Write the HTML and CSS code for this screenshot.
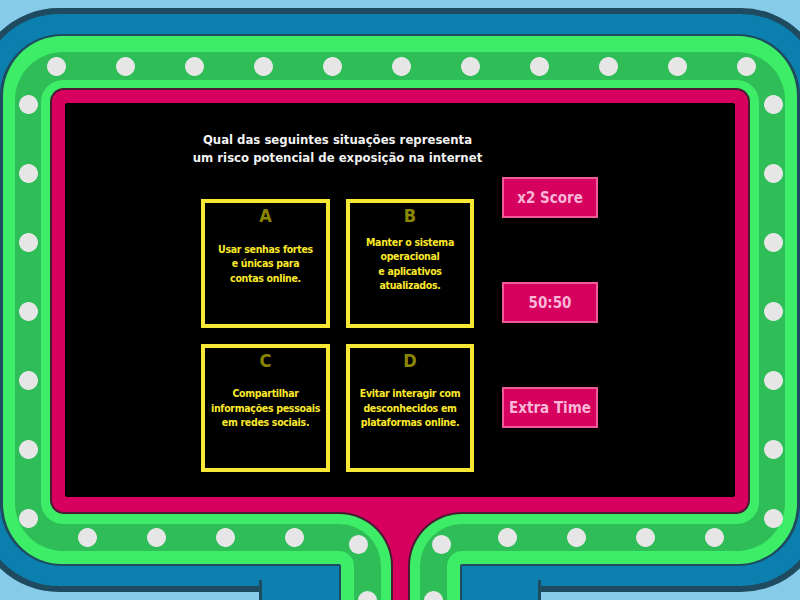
FILE: index.html
```
<!DOCTYPE html>
<html lang="pt">
<head>
<meta charset="utf-8">
<title>Quiz</title>
<link rel="stylesheet" href="styles.css">
</head>
<body>
<div class="board">
  <div class="ring">
    <div class="band">
      <div class="inner">
        <div class="line">
          <div class="pink">
            <div class="screen">
              <div class="main">
                <p class="question">Qual das seguintes situações representa<br>um risco potencial de exposição na internet</p>
                <div class="grid">
                  <div class="card"><div class="letter">A</div><div class="answer">Usar senhas fortes<br>e únicas para<br>contas online.</div></div>
                  <div class="card"><div class="letter">B</div><div class="answer">Manter o sistema<br>operacional<br>e aplicativos<br>atualizados.</div></div>
                  <div class="card"><div class="letter">C</div><div class="answer">Compartilhar<br>informações pessoais<br>em redes sociais.</div></div>
                  <div class="card"><div class="letter">D</div><div class="answer">Evitar interagir com<br>desconhecidos em<br>plataformas online.</div></div>
                </div>
              </div>
              <div class="powerups">
                <div class="pu">x2 Score</div>
                <div class="pu">50:50</div>
                <div class="pu">Extra Time</div>
              </div>
            </div>
          </div>
        </div>
      </div>
    </div>
  </div>
</div>

<div class="stand"></div>
<div class="neck"></div>
<div class="leg leg-left"><div class="l1"><div class="l2"><div class="l3"><div class="l4"><div class="l5"></div></div></div></div></div></div>
<div class="leg leg-right"><div class="l1"><div class="l2"><div class="l3"><div class="l4"><div class="l5"></div></div></div></div></div></div>

<div class="dots dots-top"></div>
<div class="dots dots-left"></div>
<div class="dots dots-right"></div>
<div class="dots dots-bl"></div>
<div class="dots dots-br"></div>
<div class="dot dot-c1"></div>
<div class="dot dot-c2"></div>
<div class="dot dot-c3"></div>
<div class="dot dot-c4"></div>
</body>
</html>
```
FILE: styles.css
```
* { box-sizing: border-box; }
html, body { margin: 0; padding: 0; }
body {
  width: 800px;
  height: 600px;
  overflow: hidden;
  position: relative;
  background: #86cbea;
  font-family: "DejaVu Sans Condensed", "DejaVu Sans", sans-serif;
  padding-top: 8px;
}

/* ===== frame ===== */
.board {
  margin: 0 -26px;
  border: 6px solid #1f4b60;
  border-radius: 85px;
  background: #0b7fae;
  padding: 20px;
}
.ring {
  border: 2px solid #1f4b60;
  border-left-width: 3px;
  border-right-width: 3px;
  border-radius: 62px;
  background: #3ded68;
  padding: 16px 12px 13px;
}
.band {
  background: #2fbd57;
  border-radius: 48px;
  padding: 28px 26px 27px;
}
.inner {
  background: #3ded68;
  border-radius: 22px;
  padding: 8px 9px 10px;
}
.line {
  background: #4a1b33;
  border-radius: 14px;
  padding: 2px;
}
.pink {
  background: #d8005f;
  border-radius: 12px;
  padding: 13px 13px 15px;
}
.screen {
  background: #000;
  height: 394px;
  border-radius: 2px;
  display: flex;
}

/* ===== content ===== */
.main {
  margin-left: 136px;
  width: 273px;
  padding-top: 28px;
}
.question {
  margin: 0 -40px;
  color: #f2f2f2;
  font-weight: bold;
  font-size: 13px;
  line-height: 18px;
  text-align: center;
  white-space: nowrap;
}
.grid {
  margin-top: 32px;
  display: grid;
  grid-template-columns: 129px 128px;
  grid-template-rows: 129px 128px;
  column-gap: 16px;
  row-gap: 16px;
}
.card {
  border: 4px solid #f7e836;
  display: grid;
}
.card > div { grid-area: 1 / 1; }
.letter {
  align-self: start;
  padding-top: 3px;
  text-align: center;
  color: #8c8700;
  font-weight: bold;
  font-size: 18px;
  line-height: 20px;
}
.answer {
  align-self: center;
  text-align: center;
  color: #fbe92a;
  font-weight: bold;
  font-size: 10.5px;
  letter-spacing: -0.3px;
  line-height: 14.5px;
  white-space: nowrap;
}
.powerups {
  margin-left: 28px;
  width: 96px;
  padding-top: 74px;
  display: flex;
  flex-direction: column;
  gap: 64px;
}
.pu {
  height: 41px;
  background: #d6005e;
  border: 2px solid #ef5a9a;
  color: #f9b6d6;
  font-weight: bold;
  font-size: 15px;
  display: flex;
  align-items: center;
  justify-content: center;
  white-space: nowrap;
}

/* ===== stand below the board ===== */
.stand {
  position: absolute;
  left: 259px;
  top: 580px;
  width: 282px;
  height: 30px;
  background: #0b7fae;
  border-left: 3px solid #1f4b60;
  border-right: 3px solid #1f4b60;
}
.neck {
  position: absolute;
  left: 341px;
  top: 497px;
  width: 119px;
  height: 110px;
  background: #d8005f;
}
.leg {
  position: absolute;
  top: 512px;
  height: 100px;
  display: flex;
  background: #4a1b33;
}
.leg > div, .leg div div { flex: 1; display: flex; }
.l1 { background: #3ded68; }
.l2 { background: #2fbd57; }
.l3 { background: #3ded68; }
.l4 { background: #1f4b60; }
.l5 { background: #0b7fae; }

.leg-left { left: 262px; width: 131px; padding: 2px 2px 0 0; border-top-right-radius: 54px; }
.leg-left .l1 { padding: 10px 10px 0 0; border-top-right-radius: 52px; }
.leg-left .l2 { padding: 27px 27px 0 0; border-top-right-radius: 42px; }
.leg-left .l3 { padding: 13px 13px 0 0; border-top-right-radius: 15px; }
.leg-left .l4 { padding: 2px 2px 0 0; border-top-right-radius: 2px; }

.leg-right { left: 408px; width: 130px; padding: 2px 0 0 2px; border-top-left-radius: 54px; }
.leg-right .l1 { padding: 10px 0 0 10px; border-top-left-radius: 52px; }
.leg-right .l2 { padding: 27px 0 0 27px; border-top-left-radius: 42px; }
.leg-right .l3 { padding: 13px 0 0 13px; border-top-left-radius: 15px; }
.leg-right .l4 { padding: 2px 0 0 2px; border-top-left-radius: 2px; }

/* ===== light bulbs ===== */
.dots {
  position: absolute;
  background-image: radial-gradient(circle at 9.5px 9.5px, #e6e6e6 9px, rgba(230,230,230,0) 9.8px);
}
.dots-top { left: 46.5px; top: 56.5px; width: 709px; height: 19px; background-size: 69px 19px; background-repeat: repeat-x; }
.dots-left { left: 18.5px; top: 94.5px; width: 19px; height: 433px; background-size: 19px 69px; background-repeat: repeat-y; }
.dots-right { left: 763.5px; top: 94.5px; width: 19px; height: 433px; background-size: 19px 69px; background-repeat: repeat-y; }
.dots-bl { left: 77.5px; top: 527.5px; width: 226px; height: 19px; background-size: 69px 19px; background-repeat: repeat-x; }
.dots-br { left: 497.5px; top: 527.5px; width: 226px; height: 19px; background-size: 69px 19px; background-repeat: repeat-x; }
.dot {
  position: absolute;
  width: 19px;
  height: 19px;
  border-radius: 50%;
  background: #e6e6e6;
}
.dot-c1 { left: 349px; top: 535px; }
.dot-c2 { left: 358px; top: 591px; }
.dot-c3 { left: 432px; top: 535px; }
.dot-c4 { left: 424px; top: 591px; }
```
